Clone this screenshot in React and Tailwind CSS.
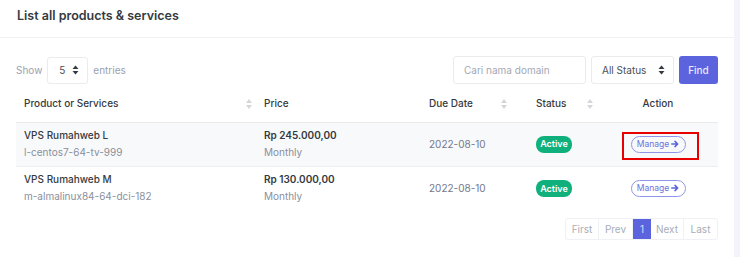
import React from "react";

const SortIcon = () => (
  <svg width="6" height="10" viewBox="0 0 6 10" className="shrink-0">
    <path d="M3 0 L6 4 L0 4 Z" fill="#d3d6da" />
    <path d="M3 10 L6 6 L0 6 Z" fill="#d3d6da" />
  </svg>
);

const Caret = () => (
  <svg width="7" height="10" viewBox="0 0 7 10" className="shrink-0">
    <path d="M3.5 0.5 L6.5 4 L0.5 4 Z" fill="#343a40" />
    <path d="M3.5 9.5 L6.5 6 L0.5 6 Z" fill="#343a40" />
  </svg>
);

const Arrow = () => (
  <svg width="8" height="8" viewBox="0 0 10 10" className="shrink-0">
    <path d="M1 5 H8 M5 1.8 L8.3 5 L5 8.2" stroke="#5b64dc" strokeWidth="2" fill="none" strokeLinecap="round" strokeLinejoin="round" />
  </svg>
);

const rows = [
  { name: "VPS Rumahweb L", host: "l-centos7-64-tv-999", price: "Rp 245.000,00", cycle: "Monthly", date: "2022-08-10", bg: "bg-[#f8f9fb]", border: "border-b border-[#eceef1]", highlight: true },
  { name: "VPS Rumahweb M", host: "m-almalinux84-64-dci-182", price: "Rp 130.000,00", cycle: "Monthly", date: "2022-08-10", bg: "bg-white", border: "", highlight: false },
];

export default function App() {
  return (
    <div className="flex w-[740px] h-[257px] bg-[#f3f3f9] overflow-hidden" style={{ fontFamily: '"Inter", "Noto Sans", sans-serif' }}>
      <div className="w-[734px] h-full bg-white">
        <div className="h-[38px] border-b border-[#f2f2f4] flex items-center pl-[17px] pb-[4px]">
          <h1 className="text-[12.5px] font-semibold text-[#343a40] leading-none">List all products &amp; services</h1>
        </div>
        <div className="pl-4 pr-4 pt-[18px]">
          <div className="flex items-center justify-between h-[28px] w-[702px]">
            <div className="flex items-center text-[10px] text-[#9aa1b0]">
              <span>Show</span>
              <div className="ml-[5px] w-[41px] h-[27px] border border-[#e9ebec] rounded-[3px] flex items-center pl-[11px] pr-[8px] justify-between text-[#495057]">
                <span className="text-[10px]">5</span>
                <Caret />
              </div>
              <span className="ml-[5px]">entries</span>
            </div>
            <div className="flex items-center h-full">
              <div className="w-[133px] h-[28px] border border-[#e9ebec] rounded-[3px] flex items-center pl-[10px] text-[10px] text-[#a3a8b3]">
                Cari nama domain
              </div>
              <div className="ml-[5px] w-[83px] h-[28px] border border-[#e9ebec] rounded-[3px] flex items-center justify-between pl-[10px] pr-[8px] text-[10px] text-[#495057]">
                <span>All Status</span>
                <Caret />
              </div>
              <div className="ml-[5px] w-[39px] h-[28px] rounded-[3px] bg-[#5b64dc] flex items-center justify-center text-[10px] font-medium text-[#e8eaff]">
                Find
              </div>
            </div>
          </div>

          <table className="mt-[2px] w-[702px] border-collapse table-fixed text-[10px]">
            <colgroup>
              <col className="w-[240px]" />
              <col className="w-[165px]" />
              <col className="w-[107px]" />
              <col className="w-[70px]" />
              <col className="w-[120px]" />
            </colgroup>
            <thead>
              <tr className="h-[36px] border-b border-[#e9ebec] text-[#343a40]">
                <th className="p-0 pl-2 pr-[4px] text-left font-medium">
                  <div className="flex items-center justify-between"><span>Product or Services</span><SortIcon /></div>
                </th>
                <th className="p-0 pl-2 text-left font-medium">Price</th>
                <th className="p-0 pl-2 pr-[21px] text-left font-medium">
                  <div className="flex items-center justify-between"><span>Due Date</span><SortIcon /></div>
                </th>
                <th className="p-0 pl-2 pr-[5px] text-left font-medium">
                  <div className="flex items-center justify-between"><span>Status</span><SortIcon /></div>
                </th>
                <th className="p-0 text-center font-medium">Action</th>
              </tr>
            </thead>
            <tbody>
              {rows.map((r, i) => (
                <tr key={i} className={`h-[44px] ${r.bg} ${r.border}`}>
                  <td className="p-0 pl-2 align-middle">
                    <div className="font-medium text-[#343a40] leading-[17px]">{r.name}</div>
                    <div className="text-[#8a8f9c] leading-[17px]">{r.host}</div>
                  </td>
                  <td className="p-0 pl-2 align-middle">
                    <div className="font-semibold text-[#343a40] leading-[17px]">{r.price}</div>
                    <div className="text-[#8a8f9c] leading-[17px]">{r.cycle}</div>
                  </td>
                  <td className="p-0 pl-2 align-middle text-[#74788d]">{r.date}</td>
                  <td className="p-0 pl-2 align-middle">
                    <span className="inline-flex items-center justify-center w-[36px] h-[17px] rounded-[8px] bg-[#10b07c] text-white text-[9px] font-semibold">Active</span>
                  </td>
                  <td className="p-0 align-middle text-center">
                    <div className="relative inline-block align-middle">
                      <span className="flex items-center justify-center gap-[2px] w-[55px] h-[17px] rounded-full border border-[#8f96ea] text-[#6b73dd] text-[8.5px]">
                        Manage <Arrow />
                      </span>
                      {r.highlight && (
                        <span className="absolute left-[-9px] top-[-4px] w-[77px] h-[28px] border-2 border-[#e60000] pointer-events-none" />
                      )}
                    </div>
                  </td>
                </tr>
              ))}
            </tbody>
          </table>

          <div className="mt-[8px] w-[702px] flex justify-end">
            <div className="flex h-[22px] border border-[#eff1f4] rounded-[3px] text-[10px] text-[#a8adb6]">
              <span className="w-[33px] flex items-center justify-center border-r border-[#eff1f4]">First</span>
              <span className="w-[34px] flex items-center justify-center border-r border-[#eff1f4]">Prev</span>
              <span className="w-[18px] flex items-center justify-center bg-[#5b64dc] text-[#d8dbff]">1</span>
              <span className="w-[33px] flex items-center justify-center border-r border-[#eff1f4]">Next</span>
              <span className="w-[33px] flex items-center justify-center">Last</span>
            </div>
          </div>
        </div>
      </div>
    </div>
  );
}
